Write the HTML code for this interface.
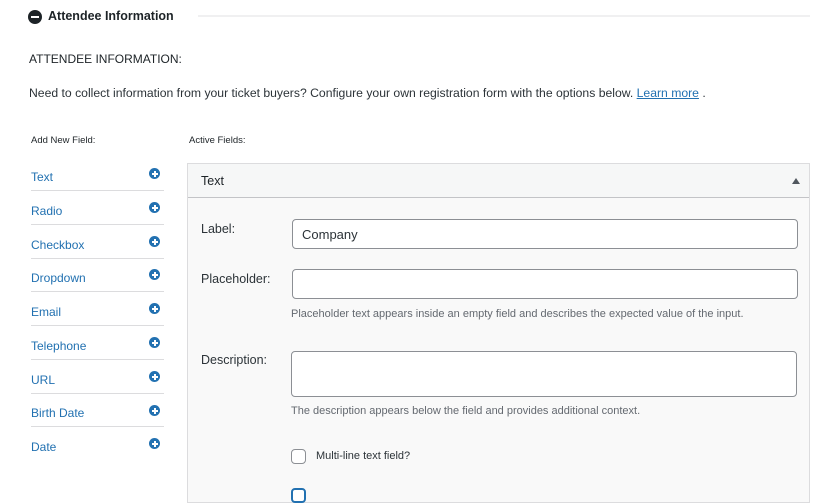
<!DOCTYPE html>
<html><head><style>
*{box-sizing:border-box;margin:0;padding:0}
body{width:824px;height:494px;overflow:hidden;background:#fff;font-family:"Liberation Sans",sans-serif;color:#1d2327;position:relative}
.a{position:absolute;white-space:nowrap}
.plus{position:absolute;width:11px;height:11px;border-radius:50%;background:#2271b1}
.plus:before{content:"";position:absolute;left:2.5px;top:4.5px;width:6px;height:2px;background:#fff}
.plus:after{content:"";position:absolute;left:4.5px;top:2.5px;width:2px;height:6px;background:#fff}
.item{position:absolute;left:31px;width:133px;height:34px;border-bottom:1px solid #dcdcde;font-size:12px;color:#2271b1}
.item span{position:absolute;left:0;top:13px}
.lab{position:absolute;left:201px;font-size:12.5px;color:#2c3338}
.inp{position:absolute;left:292px;width:506px;border:1px solid #8c8f94;border-radius:4px;background:#fff}
.help{position:absolute;left:291px;font-size:11px;color:#646970}
</style></head><body>
<div class="a" style="left:28px;top:10px;width:14px;height:14px;border-radius:50%;background:#1d2327"></div>
<div class="a" style="left:31px;top:16px;width:8px;height:2px;background:#fff"></div>
<div class="a" style="left:48px;top:9px;font-size:12.5px;font-weight:bold;color:#1d2327">Attendee Information</div>
<div class="a" style="left:198px;top:15px;width:612px;height:2px;background:#f0f0f1"></div>
<div class="a" style="left:29px;top:52px;font-size:12px;color:#1d2327">ATTENDEE INFORMATION:</div>
<div class="a" style="left:29px;top:86px;font-size:12.2px;color:#2c3338">Need to collect information from your ticket buyers? Configure your own registration form with the options below. <span style="color:#2271b1;text-decoration:underline">Learn more</span> .</div>
<div class="a" style="left:31px;top:135px;font-size:9.5px;color:#1d2327">Add New Field:</div>
<div class="a" style="left:189px;top:135px;font-size:9.5px;color:#1d2327">Active Fields:</div>

<div class="item" style="top:157px"><span>Text</span></div><div class="plus" style="left:149px;top:168px"></div>
<div class="item" style="top:191px"><span>Radio</span></div><div class="plus" style="left:149px;top:202px"></div>
<div class="item" style="top:225px"><span>Checkbox</span></div><div class="plus" style="left:149px;top:236px"></div>
<div class="item" style="top:258px"><span>Dropdown</span></div><div class="plus" style="left:149px;top:269px"></div>
<div class="item" style="top:292px"><span>Email</span></div><div class="plus" style="left:149px;top:303px"></div>
<div class="item" style="top:326px"><span>Telephone</span></div><div class="plus" style="left:149px;top:337px"></div>
<div class="item" style="top:360px"><span>URL</span></div><div class="plus" style="left:149px;top:371px"></div>
<div class="item" style="top:393px"><span>Birth Date</span></div><div class="plus" style="left:149px;top:405px"></div>
<div class="item" style="top:427px;border-bottom:none"><span>Date</span></div><div class="plus" style="left:149px;top:438px"></div>

<div class="a" style="left:187px;top:163px;width:623px;height:340px;border:1px solid #dcdcde;background:#f9f9f9"></div>
<div class="a" style="left:188px;top:164px;width:621px;height:34px;border-bottom:1px solid #c3c4c7;background:#f6f7f7"></div>
<div class="a" style="left:201px;top:174px;font-size:12.5px;color:#1d2327">Text</div>
<div class="a" style="left:792px;top:178px;width:0;height:0;border-left:4px solid transparent;border-right:4px solid transparent;border-bottom:6px solid #50575e"></div>

<div class="lab" style="top:222px">Label:</div>
<div class="inp" style="top:219px;height:30px"><span class="a" style="left:9px;top:7px;font-size:13px;color:#2c3338">Company</span></div>
<div class="lab" style="top:272px">Placeholder:</div>
<div class="inp" style="top:269px;height:30px"></div>
<div class="help" style="top:308px">Placeholder text appears inside an empty field and describes the expected value of the input.</div>
<div class="lab" style="top:353px">Description:</div>
<div class="inp" style="left:291px;top:351px;height:46px"></div>
<div class="help" style="top:405px">The description appears below the field and provides additional context.</div>
<div class="a" style="left:291px;top:449px;width:15px;height:15px;border:1px solid #8c8f94;border-radius:4px;background:#fff"></div>
<div class="a" style="left:316px;top:450px;font-size:11px;color:#2c3338">Multi-line text field?</div>
<div class="a" style="left:291px;top:488px;width:15px;height:15px;border:2px solid #2271b1;border-radius:4px;background:#fff"></div>
</body></html>
